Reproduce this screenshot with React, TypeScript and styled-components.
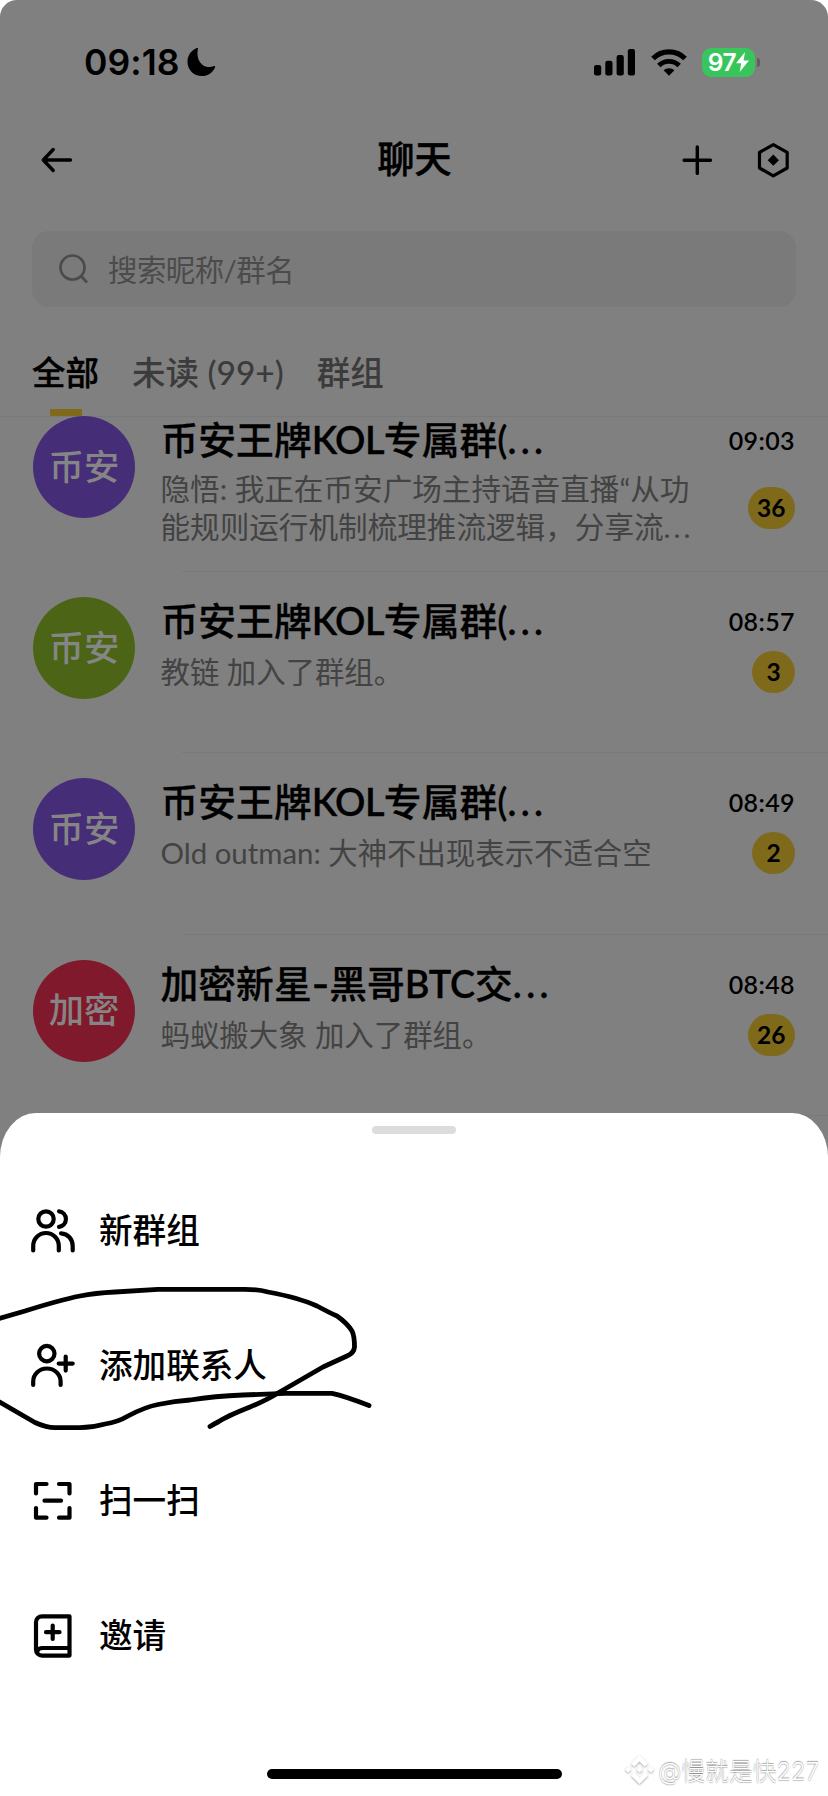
import React from "react";
import styled, { createGlobalStyle } from "styled-components";

const GlobalStyle = createGlobalStyle`
  * { box-sizing: border-box; }
  html, body { margin: 0; padding: 0; background: #fff; }
  body {
    font-family: Lato, "Noto Sans CJK SC", sans-serif;
    color: #000;
    -webkit-font-smoothing: antialiased;
  }
`;

const Phone = styled.div`
  position: relative;
  width: 828px;
  height: 1796px;
  overflow: hidden;
  display: flex;
  flex-direction: column;
`;

const Screen = styled.main`
  height: 1180px;
  flex: none;
  background: #808080;
  border-radius: 17px 17px 0 0;
  overflow: hidden;
`;

const StatusBar = styled.div`
  height: 121px;
  padding: 3px 69px 0 84px;
  display: flex;
  align-items: center;
  justify-content: space-between;
  font-family: Inter, sans-serif;
`;

const Clock = styled.div`
  display: flex;
  align-items: center;
  gap: 7px;
  font-size: 35.5px;
  font-weight: 600;
  letter-spacing: 0.1px;
`;

const StatusIcons = styled.div`
  display: flex;
  align-items: center;
  height: 30px;
`;

const Battery = styled.div`
  width: 53px;
  height: 29px;
  margin-left: 15px;
  border-radius: 9px;
  background: #38c55c;
  color: #fff;
  display: flex;
  align-items: center;
  justify-content: center;
  font-size: 24.5px;
  font-weight: 600;
  letter-spacing: -0.4px;
`;

const BatteryCap = styled.span`
  width: 3px;
  height: 9px;
  margin: 0 -1px 0 2px;
  border-radius: 0 3px 3px 0;
  background: #5f5f5f;
`;

const Header = styled.header`
  height: 76px;
  padding: 1px 37px 0 38px;
  display: grid;
  grid-template-columns: 1fr auto 1fr;
  align-items: center;
`;

const HeaderTitle = styled.h1`
  margin: 0;
  padding-bottom: 2px;
  font-size: 37px;
  line-height: 50px;
  font-weight: 500;
  -webkit-text-stroke: 0.6px #000;
`;

const HeaderActions = styled.div`
  display: flex;
  justify-content: flex-end;
  gap: 40px;
`;

const SearchBox = styled.div`
  margin: 34px 32px 0;
  height: 76px;
  border-radius: 17px;
  background: #7a7a7a;
  display: flex;
  align-items: center;
  padding: 0 0 3px 26px;
  gap: 18px;
  font-size: 29.4px;
  letter-spacing: -0.5px;
  color: #4b4b4b;
`;

const Tabs = styled.nav`
  height: 110px;
  padding: 39px 32px 0;
  display: flex;
  gap: 33px;
  border-bottom: 1px solid #797979;
`;

const Tab = styled.div<{ $active?: boolean }>`
  display: flex;
  flex-direction: column;
  align-items: center;
  justify-content: space-between;
  font-size: 33.5px;
  line-height: 52px;
  white-space: nowrap;
  font-weight: 500;
  color: ${(p) => (p.$active ? "#000" : "#3b3b3b")};
  -webkit-text-stroke: ${(p) => (p.$active ? "0.4px" : "0")} #000;
`;

const TabMark = styled.span`
  width: 32px;
  height: 7px;
  background: #7f6a1b;
`;

const Row = styled.section<{ $first?: boolean }>`
  height: ${(p) => (p.$first ? 155 : 181.3)}px;
  padding: ${(p) => (p.$first ? 0 : 26)}px 33px 0 33px;
  display: flex;
  background: linear-gradient(#797979, #797979) right bottom / 646px 1px no-repeat;
`;

const Avatar = styled.div<{ $color: string }>`
  width: 102px;
  height: 102px;
  margin-top: -1px;
  padding-bottom: 6px;
  flex: none;
  border-radius: 50%;
  background: ${(p) => p.$color};
  color: #858585;
  display: flex;
  align-items: center;
  justify-content: center;
  font-size: 35.3px;
  font-weight: 500;
`;

const Body = styled.div`
  flex: none;
  width: 540px;
  margin: -2px 0 0 25.5px;
`;

const Name = styled.div`
  font-size: 37.8px;
  line-height: 50px;
  font-weight: 500;
  -webkit-text-stroke: 0.3px #000;
  white-space: nowrap;
`;

const Latin = styled.span<{ $spacing: number }>`
  font-weight: 600;
  letter-spacing: ${(p) => p.$spacing}px;
`;

const Hyphen = styled.span`
  font-family: Inter, sans-serif;
`;

const Preview = styled.div<{ $single?: boolean }>`
  margin-top: ${(p) => (p.$single ? 7 : 5)}px;
  font-size: ${(p) => (p.$single ? 29.4 : 29.6)}px;
  line-height: 38px;
  font-weight: 400;
  color: #434343;
  white-space: pre;
`;

const Dots = styled.span`
  letter-spacing: 3px;
`;

const Side = styled.div<{ $double?: boolean }>`
  flex: 1;
  margin-top: -1px;
  display: flex;
  flex-direction: column;
  align-items: flex-end;
  gap: ${(p) => (p.$double ? 23 : 6)}px;
`;

const Time = styled.div`
  font-size: 25px;
  line-height: 48px;
  font-weight: 600;
  letter-spacing: 0.4px;
  white-space: nowrap;
`;

const Badge = styled.div`
  min-width: 43px;
  height: 42px;
  padding: 0 9.500px;
  border-radius: 21px;
  background: #7f6a1b;
  font-size: 24.5px;
  line-height: 41px;
  font-weight: 700;
  text-align: center;
`;

const Sheet = styled.section`
  position: absolute;
  left: 0;
  right: 0;
  bottom: 0;
  height: 683px;
  border-radius: 36px 36px 0 0 / 44px 44px 0 0;
  background: #fff;
  display: flex;
  flex-direction: column;
`;

const Handle = styled.div`
  width: 84px;
  height: 8px;
  margin: 13px auto 28px;
  border-radius: 4px;
  background: #dcdcdc;
`;

const MenuItem = styled.div`
  height: 135px;
  padding-left: 28px;
  display: flex;
  align-items: center;
  gap: 22px;
  font-size: 33.6px;
  font-weight: 500;
`;

const MenuLabel = styled.span`
  padding-bottom: 3px;
`;

const HomeBar = styled.div`
  width: 295px;
  height: 10px;
  margin: auto auto 17.5px;
  border-radius: 5px;
  background: #000;
`;

const Scribble = styled.svg`
  position: absolute;
  left: 0;
  top: 1270px;
`;

const Watermark = styled.div`
  position: absolute;
  right: 9px;
  bottom: 8px;
  display: flex;
  align-items: center;
  gap: 4px;
  height: 38px;
  color: #fff;
  font-family: Inter, "Noto Sans CJK SC", sans-serif;
  font-size: 23.8px;
  font-weight: 300;
  white-space: nowrap;
  text-shadow: 0 -1px 1px rgba(0, 0, 0, 0.35), 0 1px 1px rgba(0, 0, 0, 0.25);
  svg { filter: drop-shadow(0 1px 1px rgba(0, 0, 0, 0.35)); }
`;

const line = { fill: "none", stroke: "#000", strokeLinecap: "round", strokeLinejoin: "round" } as const;

const Moon = () => (
  <svg width="29" height="28" viewBox="0 0 29 28">
    <path d="M11 0.3C9.6 7 11 13.2 15 16.4c3.600 3 8.300 3.200 12 1.700.8-.3 1.400.3 1.100 1.100C25.800 25 20.800 28 15 28 6.700 28 .5 21.800.5 13.700.5 7.500 4.200 2.400 9.800.1c.7-.3 1.300-.2 1.200.2z" />
  </svg>
);

const Signal = () => (
  <svg width="42" height="28" viewBox="0 0 42 28">
    <rect x="0" y="17" width="7.200" height="10.500" rx="2.200" />
    <rect x="11.300" y="12.800" width="7.200" height="14.700" rx="2.200" />
    <rect x="22.600" y="7" width="7.200" height="20.500" rx="2.200" />
    <rect x="33.800" y="1" width="7.200" height="26.500" rx="2.200" />
  </svg>
);

const WifiSvg = styled.svg`
  margin-left: 15px;
`;

const Wifi = () => (
  <WifiSvg width="36" height="27" viewBox="0 0 36 27">
    <path d="M2 9.500a22.700 22.700 0 0 1 32 0" fill="none" stroke="#000" strokeWidth="5.200" />
    <path d="M7.800 16.500a14.600 14.600 0 0 1 20.400 0" fill="none" stroke="#000" strokeWidth="4.800" />
    <path d="M18 26.800l-5.400-5.500a8 8 0 0 1 10.800 0z" />
  </WifiSvg>
);

const Bolt = () => (
  <svg width="13" height="20" viewBox="0 0 13 20">
    <path d="M9 0L0 11.200h5.200L3.700 20 13 8.400H7.600z" fill="#fff" />
  </svg>
);

const BackArrow = () => (
  <svg width="36" height="30" viewBox="0 0 36 30" {...line} strokeWidth="3.400">
    <path d="M32.500 15H5.500M15.200 4.500L5.300 15l9.900 10.500" />
  </svg>
);

const PlusIcon = () => (
  <svg width="36" height="36" viewBox="0 0 36 36" {...line} strokeWidth="3.400">
    <path d="M18.300 5v26.400M5.100 18.200h26.400" />
  </svg>
);

const HexIcon = () => (
  <svg width="36" height="36" viewBox="0 0 36 36" {...line} strokeWidth="3.200">
    <path d="M18.300 2.600L32.200 10.400V26L18.300 33.800 4.500 26V10.400z" />
    <path d="M18.300 12.600l5.600 5.600-5.600 5.600-5.600-5.600z" fill="#000" stroke="none" />
  </svg>
);

const SearchIcon = () => (
  <svg width="32" height="32" viewBox="0 0 32 32" fill="none" stroke="#4b4b4b" strokeWidth="2.600">
    <circle cx="14.500" cy="15.500" r="12" />
    <path d="M23 24l6 6.500" />
  </svg>
);

const GroupIcon = () => (
  <svg width="49" height="48" viewBox="0 0 49 48" {...line} strokeWidth="4.200">
    <circle cx="18" cy="13" r="7.700" />
    <path d="M5.200 44.500V40a12.800 13 0 0 1 25.600 0v4.500M31 5.300a7.800 7.800 0 0 1 0 15.500M33 27.300C40 27.800 44.700 33 44.700 40v4.500" />
  </svg>
);

const AddUserIcon = () => (
  <svg width="49" height="48" viewBox="0 0 49 48" {...line} strokeWidth="4.200">
    <circle cx="18.800" cy="12.600" r="7.700" />
    <path d="M5.200 44V40.500a13.700 13 0 0 1 27.400 0V44M37.700 15.600v14M30.700 22.600h14" />
  </svg>
);

const ScanIcon = () => (
  <svg width="49" height="48" viewBox="0 0 49 48" {...line} strokeWidth="4.200">
    <path d="M8 17.500V8h10.500M31 8h10.500v9.500M8 32v9.700h10.500M31 41.700h10.500V32M16.500 24.700h16.500" />
  </svg>
);

const InviteIcon = () => (
  <svg width="49" height="48" viewBox="0 0 49 48" {...line} strokeWidth="4.200">
    <path d="M41.500 44.600V5.300H14A6 6 0 0 0 8 11.300V38.500a6 6 0 0 0 6 6.100H41.500M41.500 37H15a6 5 0 0 0-6 3.500M24.700 14.500v13.500M18 21.200h13.500" />
  </svg>
);

const BinanceMark = () => (
  <svg width="29" height="29" viewBox="0 0 29 29" fill="#fff">
    <path d="M14.500 0l8.500 8.500-3.200 3.200-5.300-5.300-5.300 5.300L6 8.500zM0 14.500l3.200-3.200 3.200 3.200-3.200 3.200zM11.300 14.500l3.200-3.200 3.200 3.200-3.200 3.200zM22.600 14.500l3.200-3.200 3.200 3.200-3.200 3.200zM6 20.500l3.200-3.200 5.300 5.300 5.300-5.300 3.200 3.200-8.500 8.500z" />
  </svg>
);

const PURPLE = "#462d78";

const kolName = (
  <>
    币安王牌<Latin $spacing={-0.6}>KOL</Latin>专属群(<Latin $spacing={4.4}>...</Latin>
  </>
);

const chats = [
  {
    avatar: "币安", color: PURPLE, time: "09:03", count: "36", name: kolName,
    preview: <>隐悟: 我正在币安广场主持语音直播“从功{"\n"}能规则运行机制梳理推流逻辑，分享流<Dots>...</Dots></>,
  },
  { avatar: "币安", color: "#4b6415", time: "08:57", count: "3", name: kolName, preview: "教链 加入了群组。" },
  { avatar: "币安", color: PURPLE, time: "08:49", count: "2", name: kolName, preview: "Old outman: 大神不出现表示不适合空" },
  {
    avatar: "加密", color: "#80192b", time: "08:48", count: "26",
    name: <>加密新星<Hyphen>-</Hyphen>黑哥<Latin $spacing={-0.2}>BTC</Latin>交<Latin $spacing={4.4}>...</Latin></>,
    preview: "蚂蚁搬大象 加入了群组。",
  },
];

const menu = [
  { icon: <GroupIcon />, label: "新群组" },
  { icon: <AddUserIcon />, label: "添加联系人" },
  { icon: <ScanIcon />, label: "扫一扫" },
  { icon: <InviteIcon />, label: "邀请" },
];

export default function App() {
  return (
    <>
      <GlobalStyle />
      <Phone>
        <Screen>
          <StatusBar>
            <Clock>09:18<Moon /></Clock>
            <StatusIcons>
              <Signal />
              <Wifi />
              <Battery>97<Bolt /></Battery>
              <BatteryCap />
            </StatusIcons>
          </StatusBar>
          <Header>
            <BackArrow />
            <HeaderTitle>聊天</HeaderTitle>
            <HeaderActions>
              <PlusIcon />
              <HexIcon />
            </HeaderActions>
          </Header>
          <SearchBox>
            <SearchIcon />
            <span>搜索昵称/群名</span>
          </SearchBox>
          <Tabs>
            <Tab $active>全部<TabMark /></Tab>
            <Tab>未读 (99+)</Tab>
            <Tab>群组</Tab>
          </Tabs>
          {chats.map((c, i) => (
            <Row key={c.time} $first={i === 0}>
              <Avatar $color={c.color}>{c.avatar}</Avatar>
              <Body>
                <Name>{c.name}</Name>
                <Preview $single={i !== 0}>{c.preview}</Preview>
              </Body>
              <Side $double={i === 0}>
                <Time>{c.time}</Time>
                <Badge>{c.count}</Badge>
              </Side>
            </Row>
          ))}
        </Screen>
        <Sheet>
          <Handle />
          {menu.map((m) => (
            <MenuItem key={m.label}>
              {m.icon}
              <MenuLabel>{m.label}</MenuLabel>
            </MenuItem>
          ))}
          <HomeBar />
        </Sheet>
        <Scribble width="380" height="170" viewBox="0 1270 380 170" {...line} strokeWidth="4.800">
          <path d="M-3 1319L25 1311 Q60 1300 80 1296 Q95 1293 115 1292 L158 1289.300 H245 Q258 1289.300 268 1292 Q300 1298 317 1306 Q330 1313 337 1316 Q347 1323 352 1331 Q354.500 1336 354.500 1347 Q354 1353 347 1356 L323 1367 L278 1393 Q267 1400 250 1407 Q225 1417 218 1422 Q214 1424 210 1426.500" />
          <path d="M-3 1400.500L35 1422.500 Q47 1428 56 1427.700 H80 Q93 1427.500 105 1424 Q118 1422 128 1416 Q145 1407 158 1404.500 Q175 1401 190 1400 Q215 1396 243 1395 L285 1393.300 H332 Q345 1396 369 1405.500" />
        </Scribble>
        <Watermark>
          <BinanceMark />
          <span>@慢就是快227</span>
        </Watermark>
      </Phone>
    </>
  );
}
